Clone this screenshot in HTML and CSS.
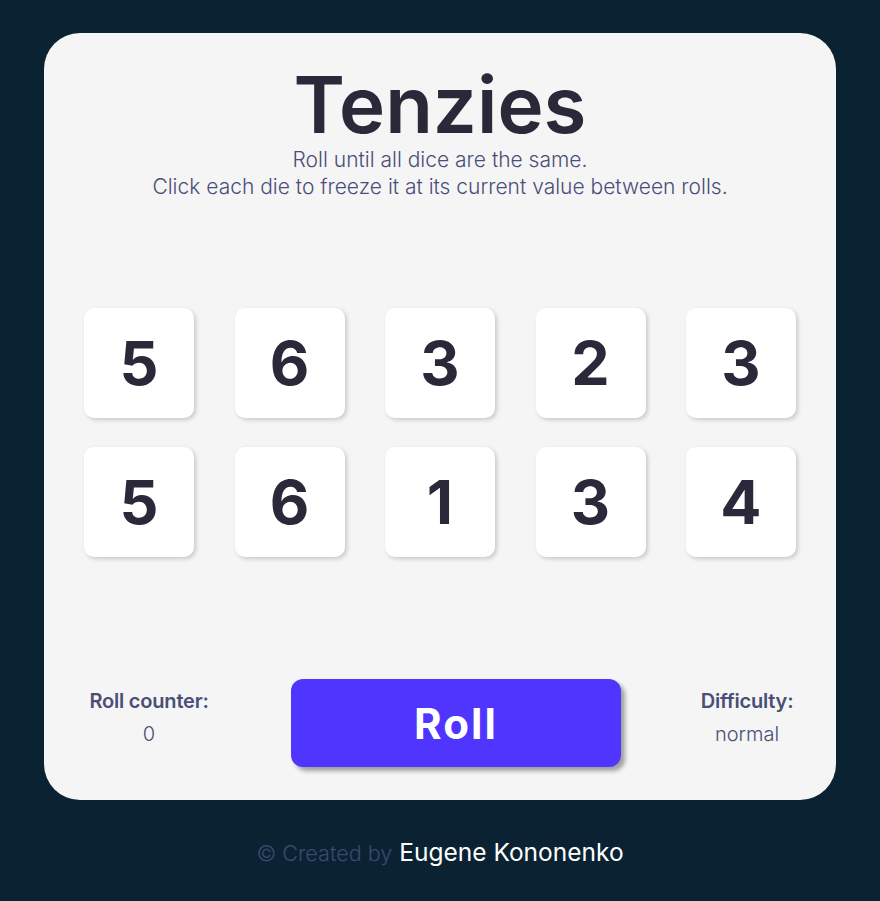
FILE: index.html
```html
<!DOCTYPE html>
<html lang="en">
<head>
  <meta charset="UTF-8">
  <meta name="viewport" content="width=device-width,initial-scale=1">
  <title>Tenzies</title>
  <link rel="stylesheet" href="styles.css">
</head>
<body>
  <main class="board">
    <h1 class="title">Tenzies</h1>
    <p class="instructions">Roll until all dice are the same.<br>Click each die to freeze it at its current value between rolls.</p>

    <div class="dice">
      <button class="die">5</button>
      <button class="die">6</button>
      <button class="die">3</button>
      <button class="die">2</button>
      <button class="die">3</button>
      <button class="die">5</button>
      <button class="die">6</button>
      <button class="die">1</button>
      <button class="die">3</button>
      <button class="die">4</button>
    </div>

    <div class="controls">
      <div class="stat stat-left">
        <span class="stat-label">Roll counter:</span>
        <span class="stat-value">0</span>
      </div>
      <button class="roll-btn">Roll</button>
      <div class="stat stat-right">
        <span class="stat-label">Difficulty:</span>
        <span class="stat-value">normal</span>
      </div>
    </div>
  </main>

  <footer class="credits">
    <span class="credits-muted">&copy; Created by</span> <span class="credits-name">Eugene Kononenko</span>
  </footer>
</body>
</html>
```

FILE: styles.css
```css
:root {
  --page-bg: #0b2233;
  --board-bg: #f5f5f5;
  --ink: #2b283a;
  --ink-soft: #4a4e78;
  --accent: #5035ff;
  --font: 'Inter', 'Noto Sans', 'Liberation Sans', sans-serif;
}

body {
  margin: 0;
  padding: 33px 0 0;
  background: var(--page-bg);
  font-family: var(--font);
  color: var(--ink);
}

.board {
  width: 792px;
  height: 767px;
  box-sizing: border-box;
  margin: 0 auto;
  padding: 33px 40px 0;
  background: var(--board-bg);
  border-radius: 36px;
  display: flex;
  flex-direction: column;
}

.title {
  margin: 0;
  text-align: center;
  font-size: 78px;
  line-height: 78px;
  font-weight: 600;
  color: var(--ink);
}

.instructions {
  margin: 2px 0 0;
  text-align: center;
  font-size: 21px;
  line-height: 27px;
  font-weight: 300;
  color: var(--ink-soft);
}

.dice {
  margin-top: 108px;
  display: grid;
  grid-template-columns: repeat(5, 110px);
  justify-content: space-between;
  row-gap: 29px;
}

.die {
  width: 110px;
  height: 110px;
  border: none;
  border-radius: 10px;
  background: #fff;
  box-shadow: 2px 2px 4px rgba(0, 0, 0, 0.18);
  font-family: var(--font);
  font-size: 61px;
  font-weight: 700;
  color: var(--ink);
  cursor: pointer;
  padding: 0;
}

.controls {
  margin-top: 122px;
  display: flex;
  align-items: center;
  justify-content: space-between;
}

.stat {
  display: flex;
  flex-direction: column;
  align-items: center;
  font-size: 20px;
  color: var(--ink-soft);
  margin-top: -10px;
}
.stat-left { width: 130px; }
.stat-right { width: 98px; }

.stat-label {
  font-weight: 600;
  line-height: 33px;
  letter-spacing: -0.01em;
}
.stat-value {
  font-weight: 300;
  line-height: 33px;
}

.roll-btn {
  width: 330px;
  height: 88px;
  border: none;
  border-radius: 12px;
  background: var(--accent);
  color: #fff;
  font-family: var(--font);
  font-size: 42px;
  font-weight: 700;
  letter-spacing: 0.05em;
  box-shadow: 4px 4px 4px rgba(0, 0, 0, 0.35);
  cursor: pointer;
}

.credits {
  margin-top: 37px;
  text-align: center;
  font-size: 24.5px;
}
.credits-muted {
  color: #3b4a6e;
  font-weight: 300;
  font-size: 21.6px;
}
.credits-name {
  color: #fff;
}
```
